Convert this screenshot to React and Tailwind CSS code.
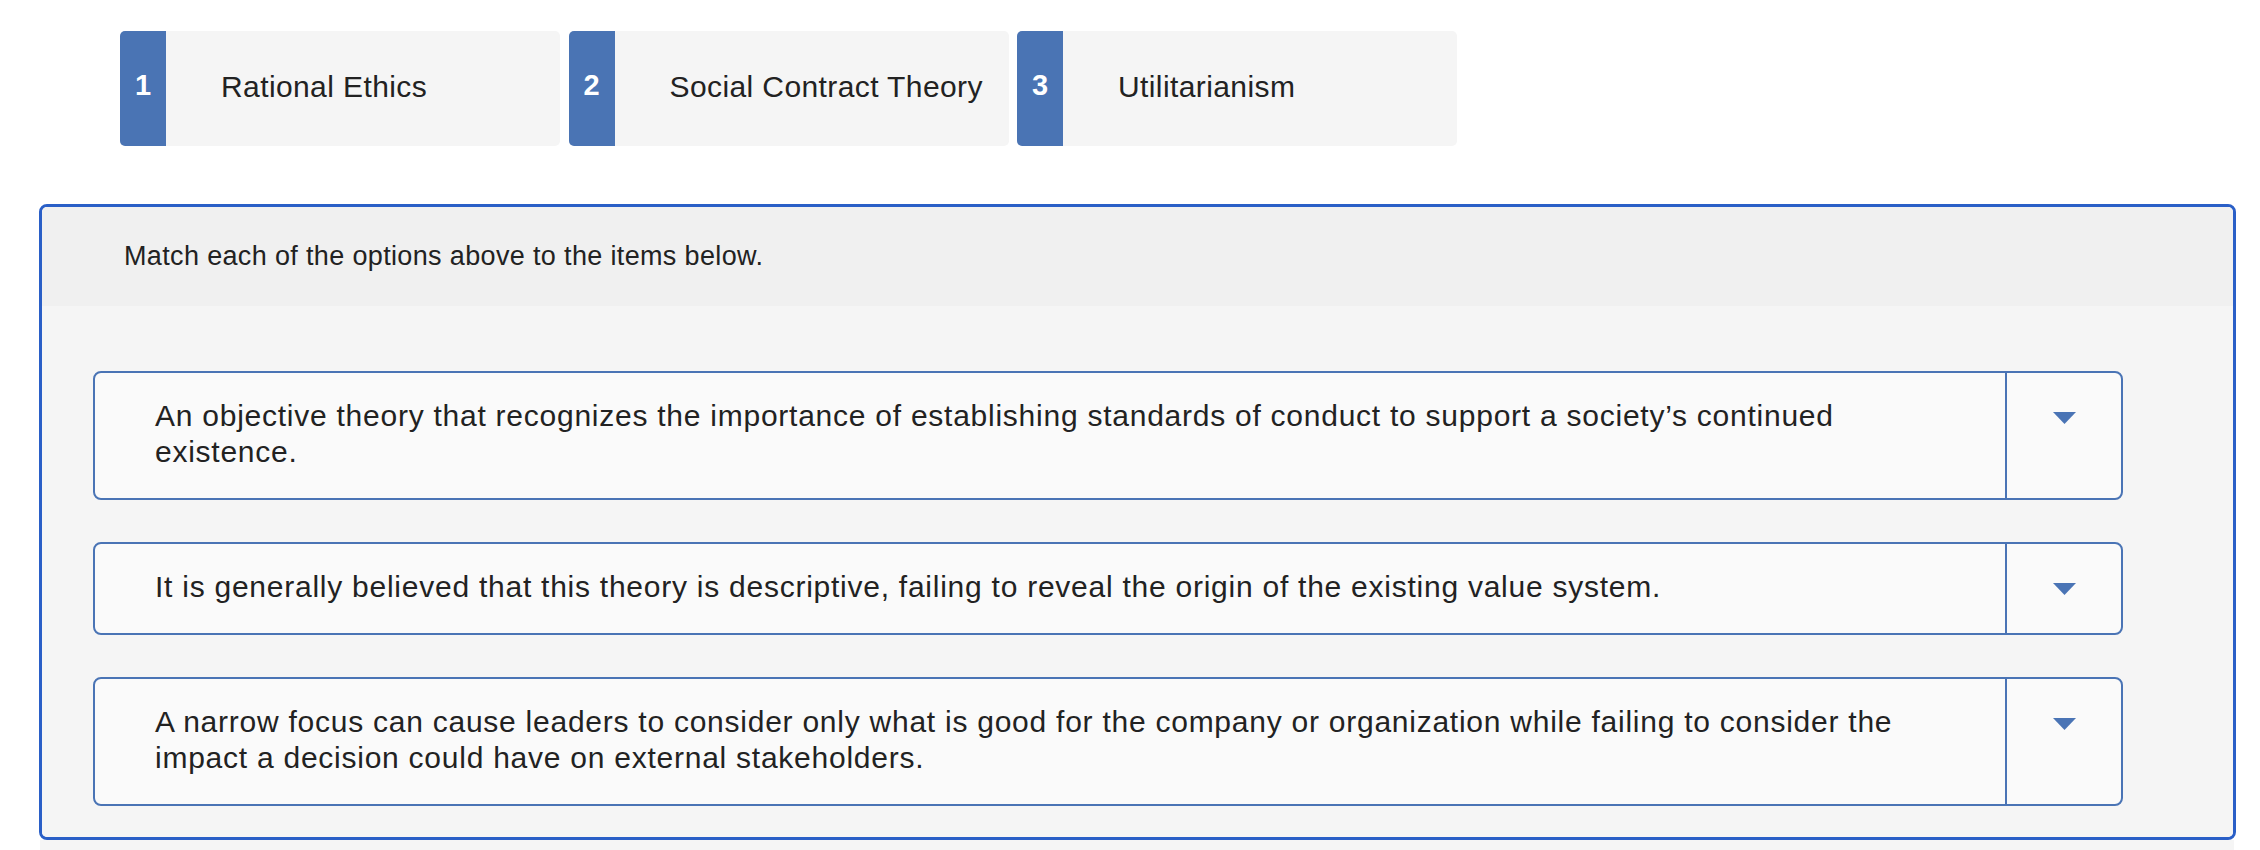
import React from "react";

const tiles = [
  { n: "1", label: "Rational Ethics" },
  { n: "2", label: "Social Contract Theory" },
  { n: "3", label: "Utilitarianism" },
];

const items = [
  "An objective theory that recognizes the importance of establishing standards of conduct to support a society\u2019s continued existence.",
  "It is generally believed that this theory is descriptive, failing to reveal the origin of the existing value system.",
  "A narrow focus can cause leaders to consider only what is good for the company or organization while failing to consider the impact a decision could have on external stakeholders.",
];

function Arrow() {
  return (
    <svg width="23" height="12" viewBox="0 0 23 12" className="block">
      <path d="M0 0 L23 0 L11.5 12 Z" fill="#4a74b5" />
    </svg>
  );
}

export default function App() {
  return (
    <div
      className="w-[2260px] h-[850px] bg-white overflow-hidden text-[#222222]"
      style={{ fontFamily: '"Liberation Sans", Arial, sans-serif' }}
    >
      <div className="flex gap-[8.5px] pl-[120px] pt-[31px]">
        {tiles.map((t) => (
          <div
            key={t.n}
            className="flex w-[440px] h-[115px] rounded-[5px] bg-[#f5f5f5] overflow-hidden"
          >
            <div className="flex w-[46px] shrink-0 items-center justify-center bg-[#4a74b4] text-white text-[29px] font-bold pb-[5px]">
              {t.n}
            </div>
            <div className="flex items-center pl-[55px] pb-[5px] text-[30px] tracking-[0.4px] text-[#222222]">
              {t.label}
            </div>
          </div>
        ))}
      </div>

      <div className="ml-[39px] mt-[58px] w-[2197px] rounded-[8px] border-[3px] border-[#2a5fc7] overflow-hidden">
        <div className="flex h-[99px] items-center bg-[#f0f0f0] pl-[82px] text-[27px] tracking-[0.35px] text-[#222222]">
          Match each of the options above to the items below.
        </div>
        <div className="flex flex-col gap-[42px] bg-[#f5f5f5] pt-[65px] pb-[31px] pl-[51px]">
          {items.map((txt, i) => (
            <div
              key={i}
              className="flex w-[2030px] rounded-[8px] border-2 border-[#4a74b5] bg-[#fafafa]"
            >
              <div className="flex-1 pl-[60px] pr-[60px] pt-[25px] pb-[28px] text-[30px] leading-[36px] tracking-[0.75px] text-[#222222]">
                {txt}
              </div>
              <div className="flex w-[116px] shrink-0 justify-center border-l-2 border-[#4a74b5] pt-[39px]">
                <Arrow />
              </div>
            </div>
          ))}
        </div>
      </div>
      <div className="ml-[40px] w-[2194px] h-[12px] bg-[#f5f5f5]" />
    </div>
  );
}
